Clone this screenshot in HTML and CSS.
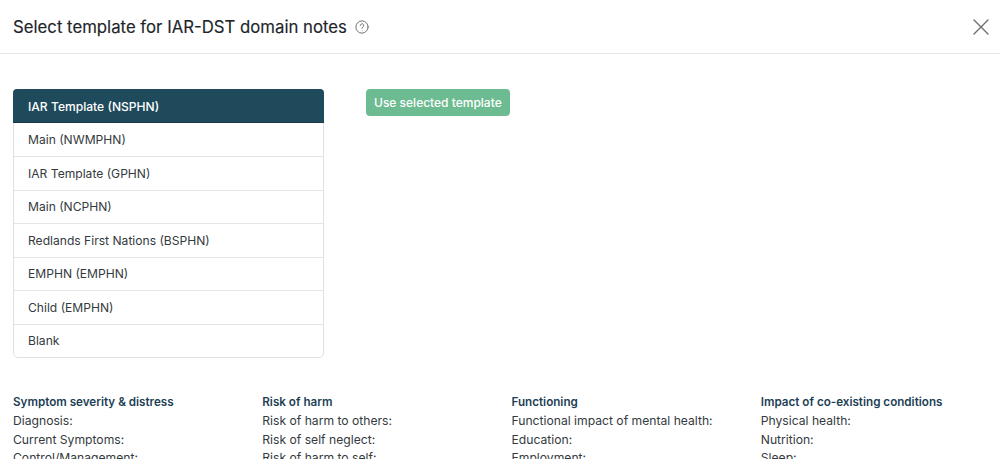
FILE: index.html
```html
<!DOCTYPE html>
<html lang="en">
<head>
<meta charset="utf-8">
<title>Select template</title>
<link rel="stylesheet" href="styles.css">
</head>
<body>
<div class="modal">
  <header class="modal-header">
    <h1 class="modal-title">Select template for IAR-DST domain notes</h1>
    <svg class="help-icon" viewBox="0 0 16 16" width="14" height="14" fill="none" stroke="#6b6b6b" stroke-width="1.1" stroke-linecap="round">
      <circle cx="8" cy="8" r="7"/>
      <path d="M6 6.2a2 2 0 1 1 3 1.8c-.7.4-1 .8-1 1.6"/>
      <circle cx="8" cy="11.8" r=".5" fill="#6b6b6b" stroke="none"/>
    </svg>
    <button class="close-btn" aria-label="Close">
      <svg viewBox="0 0 16 16" width="16" height="16" fill="none" stroke="#6e6e6e" stroke-width="1.4" stroke-linecap="round"><path d="M1 1l14 14M15 1L1 15"/></svg>
    </button>
  </header>
  <main class="modal-body">
    <div class="picker">
      <ul class="template-list">
        <li class="template-item active">IAR Template (NSPHN)</li>
        <li class="template-item">Main (NWMPHN)</li>
        <li class="template-item">IAR Template (GPHN)</li>
        <li class="template-item">Main (NCPHN)</li>
        <li class="template-item">Redlands First Nations (BSPHN)</li>
        <li class="template-item">EMPHN (EMPHN)</li>
        <li class="template-item">Child (EMPHN)</li>
        <li class="template-item">Blank</li>
      </ul>
      <button class="use-btn">Use selected template</button>
    </div>
    <section class="domains">
      <div class="domain">
        <h2 class="domain-title">Symptom severity &amp; distress</h2>
        <p class="domain-line">Diagnosis:</p>
        <p class="domain-line">Current Symptoms:</p>
        <p class="domain-line">Control/Management:</p>
      </div>
      <div class="domain">
        <h2 class="domain-title">Risk of harm</h2>
        <p class="domain-line">Risk of harm to others:</p>
        <p class="domain-line">Risk of self neglect:</p>
        <p class="domain-line">Risk of harm to self:</p>
      </div>
      <div class="domain">
        <h2 class="domain-title">Functioning</h2>
        <p class="domain-line">Functional impact of mental health:</p>
        <p class="domain-line">Education:</p>
        <p class="domain-line">Employment:</p>
      </div>
      <div class="domain">
        <h2 class="domain-title">Impact of co-existing conditions</h2>
        <p class="domain-line">Physical health:</p>
        <p class="domain-line">Nutrition:</p>
        <p class="domain-line">Sleep:</p>
      </div>
    </section>
  </main>
</div>
</body>
</html>
```
FILE: styles.css
```css
* { box-sizing: border-box; }
html, body { margin: 0; height: 459px; overflow: hidden; background: #fff; }
body { font-family: Inter, "Liberation Sans", sans-serif; color: #212529; }
.modal { display: flex; flex-direction: column; }
.modal-header {
  display: flex; align-items: center; height: 54px; padding: 0 11px 0 13px;
  border-bottom: 1px solid #e3e5e7;
}
.modal-title { margin: 0; font-size: 16.75px; font-weight: 400; line-height: 24px; color: #212529; -webkit-text-stroke: 0.15px #212529; }
.help-icon { margin-left: 8px; margin-top: 1px; flex: none; }
.close-btn { margin-left: auto; padding: 0; border: 0; background: none; display: flex; }
.modal-body { padding: 35px 13px 0; }
.picker { display: flex; align-items: flex-start; gap: 42px; }
.template-list {
  list-style: none; margin: 0; padding: 0; width: 311px;
  border: 1px solid #dee2e6; border-radius: 5px;
}
.template-item {
  height: 33.5px; padding: 0 14px; display: flex; align-items: center;
  font-size: 12.1px; color: #343a40; border-top: 1px solid #e3e5e7;
}
.template-item.active { background: #1f4a5c; color: #fff; font-weight: 500; border: 0; border-bottom: 1px solid #163a4a; margin: -1px -1px 0; height: 34px; padding: 1px 14px 0 15px; border-radius: 4px 4px 0 0; }
.template-item.active + .template-item { border-top: 0; height: 33px; }
.use-btn {
  height: 27px; padding: 0 8px; border: 0; border-radius: 4px;
  background: #6dbb91; color: #fff; font: 500 12px Inter, "Liberation Sans", sans-serif;
}
.domains { display: grid; grid-template-columns: repeat(4, 249.25px); margin-top: 35.4px; }
.domain-title { margin: 0; font-size: 11.65px; font-weight: 600; line-height: 19px; color: #1d3f55; }
.domain-line { margin: 0; font-size: 12.15px; line-height: 18.5px; color: #343a40; }
```
